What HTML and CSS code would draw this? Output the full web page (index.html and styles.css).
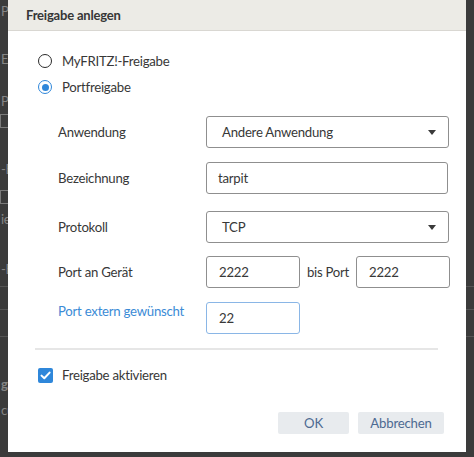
FILE: index.html
```html
<!DOCTYPE html>
<html lang="de">
<head>
<meta charset="utf-8">
<title>Freigabe anlegen</title>
<link rel="stylesheet" href="styles.css">
</head>
<body>
<div class="backdrop">
  <div class="bg-row t1">Port</div>
  <div class="bg-row t2">EA</div>
  <div class="bg-row t3">Port</div>
  <div class="bg-box b1"></div>
  <div class="bg-row t4">-E</div>
  <div class="bg-box b2"></div>
  <div class="bg-row t5">ie</div>
  <div class="bg-row t6">-E</div>
  <div class="bg-line l1"></div>
  <div class="bg-line l2"></div>
  <div class="bg-line l3"></div>
  <div class="bg-row t7">ga</div>
  <div class="bg-row t8">cu</div>
</div>

<div class="modal">
  <div class="modal-head">Freigabe anlegen</div>
  <div class="modal-body">
    <div class="radios">
      <label class="radio"><span class="radio-dot"></span><span>MyFRITZ!-Freigabe</span></label>
      <label class="radio is-checked"><span class="radio-dot"></span><span>Portfreigabe</span></label>
    </div>

    <div class="form">
      <div class="row">
        <span class="label">Anwendung</span>
        <div class="field select wide"><span>Andere Anwendung</span><span class="caret"></span></div>
      </div>
      <div class="row">
        <span class="label">Bezeichnung</span>
        <div class="field wide narrow-r"><span>tarpit</span></div>
      </div>
      <div class="row row-proto">
        <span class="label">Protokoll</span>
        <div class="field select wide"><span>TCP</span><span class="caret"></span></div>
      </div>
      <div class="row row-ports">
        <span class="label">Port an Gerät</span>
        <div class="ports">
          <div class="field port"><span>2222</span></div>
          <span class="bis">bis Port</span>
          <div class="field port"><span>2222</span></div>
        </div>
      </div>
      <div class="row row-extern">
        <span class="label label-blue">Port extern gewünscht</span>
        <div class="field port focus"><span>22</span></div>
      </div>
    </div>

    <div class="divider"></div>

    <label class="check">
      <span class="check-box">
        <svg width="15" height="15" viewBox="0 0 15 15"><path d="M3.5 7.6 L6.3 10.3 L11.6 4.6" fill="none" stroke="#fff" stroke-width="2" stroke-linecap="round" stroke-linejoin="round"/></svg>
      </span>
      <span>Freigabe aktivieren</span>
    </label>
  </div>
  <div class="modal-foot">
    <button class="btn btn-ok">OK</button>
    <button class="btn btn-cancel">Abbrechen</button>
  </div>
</div>
</body>
</html>
```
FILE: styles.css
```css
html, body {
  margin: 0;
  padding: 0;
}
body {
  width: 474px;
  height: 457px;
  overflow: hidden;
  background: #3b3b3b;
  font-family: "Lato", "Liberation Sans", sans-serif;
  font-size: 13.2px;
  letter-spacing: -0.25px;
  color: #383838;
}

/* dimmed page underneath */
.backdrop {
  display: flex;
  flex-direction: column;
  color: #858585;
  font-size: 13px;
}
.bg-row {
  margin-left: 1px;
  height: 14px;
  line-height: 14px;
  white-space: nowrap;
}
.t1 { margin-top: 4px; }
.t2 { margin-top: 34px; }
.t3 { margin-top: 28px; }
.bg-box {
  margin-left: 0;
  width: 16px;
  height: 12px;
  border: 1px solid #7a7a7a;
}
.b1 { margin-top: 6px; }
.t4 { margin-top: 34px; }
.b2 { margin-top: 14px; }
.t5 { margin-top: 8px; }
.t6 { margin-top: 36px; }
.bg-line {
  height: 1px;
  background: #555;
  width: 474px;
}
.l1 { margin-top: 10px; }
.l2 { margin-top: 22px; }
.l3 { margin-top: 26px; }
.t7 { margin-top: 40px; font-weight: 700; }
.t8 { margin-top: 12px; }

/* modal dialog */
.modal {
  position: fixed;
  left: 8px;
  top: 0;
  width: 458px;
  height: 452px;
  background: #fff;
  display: flex;
  flex-direction: column;
}
.modal-head {
  height: 30px;
  line-height: 31px;
  background: #ecebe6;
  border-bottom: 1px solid #d9d7d2;
  padding-left: 18px;
  font-weight: 700;
  font-size: 13px;
  letter-spacing: -0.2px;
  color: #363636;
}
.modal-body {
  flex: 1;
  padding: 17px 14px 0 30px;
  display: flex;
  flex-direction: column;
}

.radios {
  display: flex;
  flex-direction: column;
}
.radio {
  height: 26px;
  display: flex;
  align-items: center;
  gap: 10px;
}
.radio-dot {
  width: 14px;
  height: 14px;
  box-sizing: border-box;
  border: 1.6px solid #2b2b2b;
  border-radius: 50%;
  display: flex;
  align-items: center;
  justify-content: center;
}
.is-checked .radio-dot {
  border-color: #2f87da;
}
.is-checked .radio-dot::after {
  content: "";
  width: 7px;
  height: 7px;
  border-radius: 50%;
  background: #2f87da;
}

.form {
  margin-top: 16px;
  display: flex;
  flex-direction: column;
  gap: 14px;
}
.row {
  display: grid;
  grid-template-columns: 148px 1fr;
  align-items: center;
  padding-left: 20px;
}
.row-proto { margin-top: 3px; }
.row-ports { margin-top: -1px; }
.row-extern { align-items: start; }
.label-blue {
  color: #3b8bd6;
  margin-top: 1px;
}
.field {
  box-sizing: border-box;
  height: 32px;
  border: 1px solid #8f8f8f;
  border-radius: 3px;
  display: flex;
  align-items: center;
  padding: 0 12px 0 14px;
  color: #383838;
}
.wide { width: 243px; }
.narrow-r { width: 242px; padding-left: 11px; }
.select {
  justify-content: space-between;
  padding-left: 15px;
}
.caret {
  width: 0;
  height: 0;
  border-left: 4.5px solid transparent;
  border-right: 4.5px solid transparent;
  border-top: 5px solid #3a3a3a;
}
.ports {
  display: flex;
  align-items: center;
  white-space: nowrap;
}
.port {
  width: 94px;
  padding-left: 12px;
}
.bis {
  width: 56px;
  flex: none;
  text-align: center;
}
.focus {
  border-color: #8ab6e6;
}

.divider {
  margin: 14px 0 0 -3px;
  height: 2px;
  width: 403px;
  background: #e6e6e6;
}

.check {
  margin-top: 17px;
  display: flex;
  align-items: center;
  gap: 9px;
}
.check-box {
  width: 15px;
  height: 15px;
  border-radius: 2px;
  background: #2f87da;
  display: flex;
}

.modal-foot {
  display: flex;
  justify-content: flex-end;
  gap: 9px;
  padding: 0 22px 18px 0;
}
.btn {
  height: 22px;
  border: none;
  border-radius: 2px;
  background: #e8ebee;
  color: #4d6a92;
  font-family: "Lato", "Liberation Sans", sans-serif;
  font-size: 13.2px;
  letter-spacing: -0.2px;
  padding: 0;
}
.btn-ok { width: 71px; }
.btn-cancel { width: 86px; }
```
